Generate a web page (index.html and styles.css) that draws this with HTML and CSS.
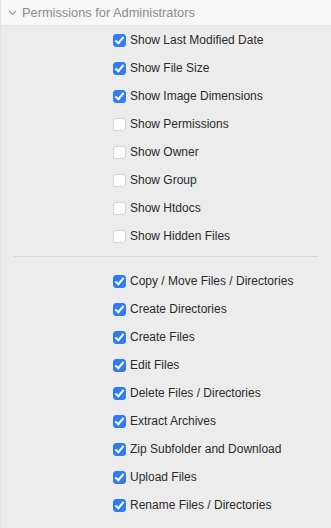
FILE: index.html
```html
<!DOCTYPE html>
<html lang="en">
<head>
    <meta charset="UTF-8">
    <meta name="viewport" content="width=device-width, initial-scale=1.0">
    <title>Permissions</title>
    <link rel="stylesheet" href="styles.css">
</head>
<body>
    <div class="panel">
        <div class="panel-header">
            <svg class="chevron" width="9" height="6" viewBox="0 0 9 6"><path d="M1 1 L4.5 4.5 L8 1" fill="none" stroke="#9a9a9a" stroke-width="1.1"/></svg>
            <span>Permissions for Administrators</span>
        </div>
        <div class="panel-body">
            <div class="group">
                <label class="row"><span class="box checked"></span>Show Last Modified Date</label>
                <label class="row"><span class="box checked"></span>Show File Size</label>
                <label class="row"><span class="box checked"></span>Show Image Dimensions</label>
                <label class="row"><span class="box"></span>Show Permissions</label>
                <label class="row"><span class="box"></span>Show Owner</label>
                <label class="row"><span class="box"></span>Show Group</label>
                <label class="row"><span class="box"></span>Show Htdocs</label>
                <label class="row"><span class="box"></span>Show Hidden Files</label>
            </div>
            <hr class="divider">
            <div class="group">
                <label class="row"><span class="box checked"></span>Copy / Move Files / Directories</label>
                <label class="row"><span class="box checked"></span>Create Directories</label>
                <label class="row"><span class="box checked"></span>Create Files</label>
                <label class="row"><span class="box checked"></span>Edit Files</label>
                <label class="row"><span class="box checked"></span>Delete Files / Directories</label>
                <label class="row"><span class="box checked"></span>Extract Archives</label>
                <label class="row"><span class="box checked"></span>Zip Subfolder and Download</label>
                <label class="row"><span class="box checked"></span>Upload Files</label>
                <label class="row"><span class="box checked"></span>Rename Files / Directories</label>
            </div>
        </div>
    </div>
</body>
</html>
```

FILE: styles.css
```css
body {
    margin: 0;
    padding: 0;
    font-family: "Liberation Sans", Arial, sans-serif;
    background-color: #ececec;
}

.panel {
    width: 331px;
    height: 528px;
    background-color: #ececec;
    border-left: 1px solid #e2e2e2;
    box-sizing: border-box;
    overflow: hidden;
}

.panel-header {
    height: 26px;
    background-color: #f7f7f7;
    border-bottom: 1px solid #e4e4e4;
    display: flex;
    align-items: center;
    padding-left: 7px;
    box-sizing: border-box;
    color: #8c8c8c;
    font-size: 12.8px;
}

.chevron {
    margin-right: 5px;
    margin-top: 1px;
}

.panel-body {
    padding-top: 0;
}

.group {
    display: flex;
    flex-direction: column;
    padding-left: 111px;
}

.row {
    height: 28px;
    display: flex;
    align-items: center;
    font-size: 12px;
    color: #2b2b2b;
}

.box {
    width: 13px;
    height: 13px;
    border-radius: 3px;
    background-color: #ffffff;
    border: 1px solid #d4d4d4;
    box-sizing: border-box;
    margin-right: 4px;
    margin-left: 1px;
}

.box.checked {
    background-color: #2f7cf6;
    border-color: #2f7cf6;
    position: relative;
}

/* white tick */
.box.checked::after {
    content: "";
    position: absolute;
    left: 3px;
    top: 0px;
    width: 3px;
    height: 7px;
    border: solid #ffffff;
    border-width: 0 2px 2px 0;
    transform: rotate(40deg);
}

.divider {
    border: none;
    border-top: 1px solid #d6d6d6;
    margin: 6px 13px 10px 13px;
}
```
